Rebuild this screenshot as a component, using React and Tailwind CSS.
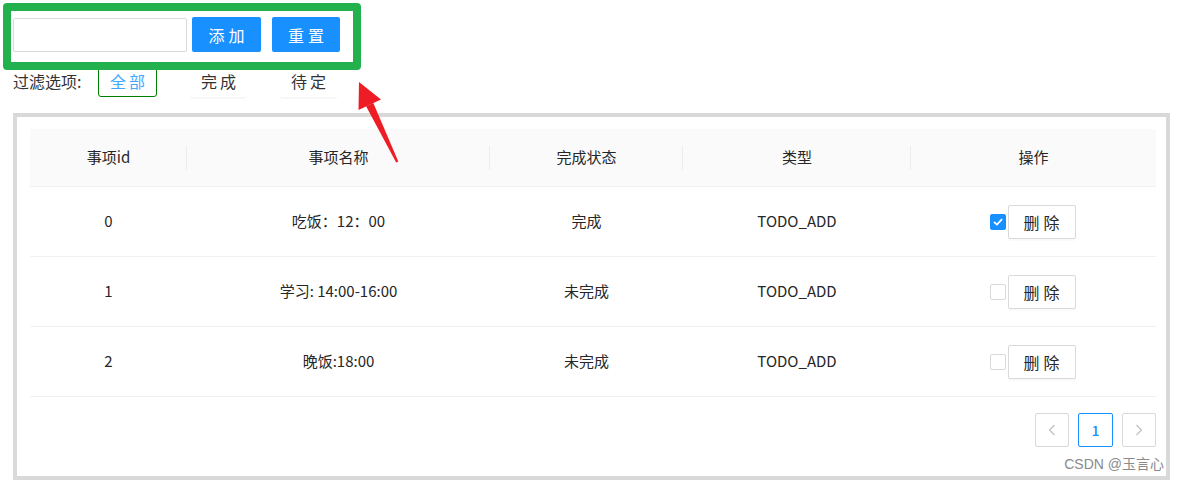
import React, { useState } from 'react';

const todos = [
  { id: 0, name: '吃饭：12：00', done: true, type: 'TODO_ADD' },
  { id: 1, name: '学习: 14:00-16:00', done: false, type: 'TODO_ADD' },
  { id: 2, name: '晚饭:18:00', done: false, type: 'TODO_ADD' },
];

const columns = ['事项id', '事项名称', '完成状态', '类型', '操作'];
const grid = 'grid grid-cols-[157px_303px_193px_228px_245px]';

const Checkbox = ({ checked, onChange }) => (
  <button
    onClick={onChange}
    className={
      'w-[16px] h-[16px] rounded-[2px] border flex items-center justify-center ' +
      (checked ? 'bg-[#1890ff] border-[#1890ff]' : 'bg-white border-[#d9d9d9]')
    }
  >
    {checked && (
      <svg width="10" height="8" viewBox="0 0 10 8">
        <path d="M1 4 L4 6.6 L9 1.2" fill="none" stroke="white" strokeWidth="1.8" />
      </svg>
    )}
  </button>
);

const App = () => {
  const [list, setList] = useState(todos);
  const [text, setText] = useState('');

  const toggle = (id) => setList(list.map((t) => (t.id === id ? { ...t, done: !t.done } : t)));

  return (
    <div className="relative w-[1181px] h-[485px] bg-white overflow-hidden pt-[17px] pl-[13px] font-['Noto_Sans_CJK_SC',sans-serif] text-[#262626]">
      {/* input row */}
      <div className="flex items-center">
        <input
          value={text}
          onChange={(e) => setText(e.target.value)}
          className="w-[174px] h-[34px] border border-[#d9d9d9] rounded-[2px] px-2 outline-none"
        />
        <button className="ml-[5px] w-[69px] h-[35px] bg-[#1890ff] text-white text-[16px] tracking-[0.25em] pl-[0.25em] rounded-[2px]">
          添加
        </button>
        <button className="ml-[11px] w-[68px] h-[35px] bg-[#1890ff] text-white text-[16px] tracking-[0.25em] pl-[0.25em] rounded-[2px]">
          重置
        </button>
      </div>

      {/* filter row */}
      <div className="mt-[13px] flex items-center h-[32px] text-[16px]">
        <span className="w-[85px] text-[#333]">过滤选项:</span>
        <button className="w-[59px] h-[32px] border border-[#008000] rounded-[3px] text-[#40a9ff] tracking-[0.2em] pl-[0.2em]">
          全部
        </button>
        <button className="ml-[33px] w-[57px] h-[32px] rounded-[3px] text-[#333] tracking-[0.2em] pl-[0.2em] shadow-[0_2px_0_rgba(0,0,0,0.03)]">
          完成
        </button>
        <button className="ml-[33px] w-[57px] h-[32px] rounded-[3px] text-[#333] tracking-[0.2em] pl-[0.2em] shadow-[0_2px_0_rgba(0,0,0,0.03)]">
          待定
        </button>
      </div>

      {/* table box */}
      <div className="relative mt-[16px] w-[1157px] h-[367px] border-[4px] border-[#d9d9d9] pt-[12px] pl-[13px] pr-[10px] text-[15px]">
        <div className={grid + ' h-[58px] bg-[#fafafa] border-b border-[#f0f0f0]'}>
          {columns.map((c, i) => (
            <div
              key={c}
              className={
                'relative flex items-center justify-center ' +
                (i < columns.length - 1
                  ? "after:content-[''] after:absolute after:right-0 after:top-[17px] after:h-[24px] after:w-px after:bg-[#ececec]"
                  : '')
              }
            >
              {c}
            </div>
          ))}
        </div>
        {list.map((t) => (
          <div key={t.id} className={grid + ' h-[70px] border-b border-[#f0f0f0]'}>
            <div className="flex items-center justify-center">{t.id}</div>
            <div className="flex items-center justify-center">{t.name}</div>
            <div className="flex items-center justify-center">{t.done ? '完成' : '未完成'}</div>
            <div className="flex items-center justify-center">{t.type}</div>
            <div className="flex items-center justify-center gap-[2px] pr-[2px]">
              <Checkbox checked={t.done} onChange={() => toggle(t.id)} />
              <button className="w-[68px] h-[34px] border border-[#d9d9d9] rounded-[2px] bg-white text-[16px] tracking-[0.25em] pl-[0.25em] shadow-[0_2px_0_rgba(0,0,0,0.02)]">
                删除
              </button>
            </div>
          </div>
        ))}

        {/* pagination */}
        <div className="mt-[16px] flex justify-end gap-[9px]">
          <button className="w-[34px] h-[34px] border border-[#d9d9d9] rounded-[2px] flex items-center justify-center text-[#c0c0c0]">
            <svg width="8" height="12" viewBox="0 0 8 12">
              <path d="M6.5 1 L1.5 6 L6.5 11" fill="none" stroke="currentColor" strokeWidth="1.2" />
            </svg>
          </button>
          <button className="w-[35px] h-[34px] border border-[#1890ff] rounded-[2px] text-[#1890ff] text-[14px] font-medium">
            1
          </button>
          <button className="w-[34px] h-[34px] border border-[#d9d9d9] rounded-[2px] flex items-center justify-center text-[#c0c0c0]">
            <svg width="8" height="12" viewBox="0 0 8 12">
              <path d="M1.5 1 L6.5 6 L1.5 11" fill="none" stroke="currentColor" strokeWidth="1.2" />
            </svg>
          </button>
        </div>

        <div className="absolute right-[2px] bottom-[1px] text-[14px] text-[#8a8a8a] font-['Liberation_Sans','Noto_Sans_CJK_SC',sans-serif]">
          CSDN @玉言心
        </div>
      </div>

      {/* annotation overlay */}
      <div className="absolute left-[3px] top-[3px] w-[358px] h-[67px] border-[8px] border-[#22b14c] rounded-[4px] pointer-events-none" />
      <svg className="absolute left-[340px] top-[70px] pointer-events-none" width="80" height="100" viewBox="0 0 80 100">
        <polygon points="19,12 41,29.5 18.5,40" fill="#ee1c25" />
        <polygon points="33.3,32.9 58.3,91.4 56.2,92.4 26.1,36.3" fill="#ee1c25" />
      </svg>
    </div>
  );
};

export default App;
